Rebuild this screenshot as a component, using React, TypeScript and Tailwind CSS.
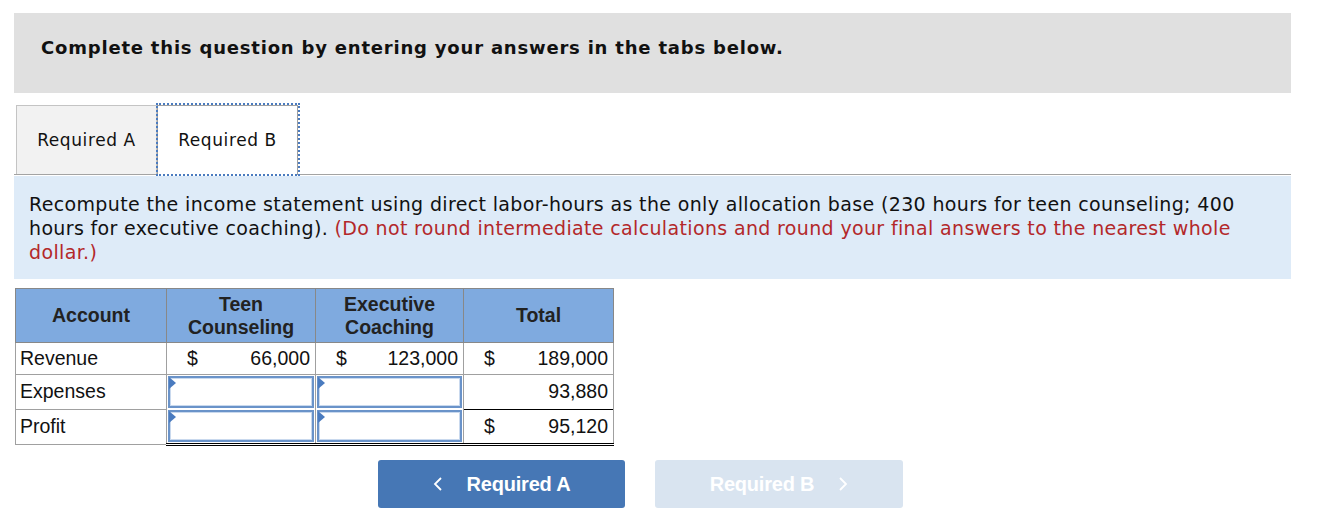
import React from "react";

const verdana = { fontFamily: '"DejaVu Sans", Verdana, sans-serif' };
const arial = { fontFamily: '"Liberation Sans", Arial, sans-serif' };

function Box() {
  return (
    <div className="relative h-[32px] m-[1px] border-2 border-[#6a93c9] bg-white shadow-[inset_0_0_0_1px_#c9d9ee]">
      <div className="absolute left-[-1px] top-[-1px] w-0 h-0 border-y-[6px] border-y-transparent border-l-[7px] border-l-[#4a7bbf]" />
    </div>
  );
}

export default function App() {
  return (
    <div className="bg-white w-[1336px] h-[514px] overflow-hidden">
      <div className="ml-[14px] w-[1277px] pt-[13px]">
        <div className="h-[80px] bg-[#e0e0e0] flex items-center pl-[27px] pb-[12px]" style={verdana}>
          <span className="text-[18px] font-bold text-[#111] tracking-[0.8px]">
            Complete this question by entering your answers in the tabs below.
          </span>
        </div>

        <div className="mt-[12px] flex items-end h-[70px] border-b border-[#a3a3a3] pl-[2px]" style={verdana}>
          <div className="h-[69px] w-[141px] bg-[#f2f2f2] border border-b-0 border-[#c4c4c4] flex items-center justify-center text-[17px] tracking-[0.6px] text-[#111] pt-[1px]">
            Required A
          </div>
          <div className="relative w-[141px] bg-white border border-b-0 border-[#a0a0a0] flex items-center justify-center text-[17px] tracking-[0.6px] text-[#111] -mb-[1px] h-[70px] pt-[1px]">
            <div className="absolute -left-[2px] -right-[3px] -top-[3px] -bottom-[1px] border-[2px] border-dotted border-[#4a7bbf]" />
            Required B
          </div>
        </div>

        <div className="mt-[1px] bg-[#deebf8] pl-[15px] pr-[40px] pt-[16px] pb-[15px] text-[19px] tracking-[0.35px] leading-[24px] text-[#111]" style={verdana}>
          Recompute the income statement using direct labor-hours as the only allocation base (230 hours for teen counseling; 400 hours for executive coaching).{" "}
          <span className="text-[#b3282a]">
            (Do not round intermediate calculations and round your final answers to the nearest whole dollar.)
          </span>
        </div>

        <table className="mt-[9px] ml-[1px] border-collapse text-[19.5px] text-[#111]" style={arial}>
          <colgroup>
            <col className="w-[151px]" />
            <col className="w-[149px]" />
            <col className="w-[148px]" />
            <col className="w-[150px]" />
          </colgroup>
          <thead>
            <tr className="h-[54px] bg-[#7faadf] font-bold text-[#222] leading-[23px]">
              <th className="border border-[#888] font-bold">Account</th>
              <th className="border border-[#888] font-bold">Teen<br />Counseling</th>
              <th className="border border-[#888] font-bold">Executive<br />Coaching</th>
              <th className="border border-[#888] font-bold">Total</th>
            </tr>
          </thead>
          <tbody>
            <tr className="h-[32px]">
              <td className="border border-[#a0a0a0] pl-[4px]">Revenue</td>
              <td className="border border-[#a0a0a0] px-[5px]">
                <div className="flex justify-between pl-[15px]"><span>$</span><span>66,000</span></div>
              </td>
              <td className="border border-[#a0a0a0] px-[5px]">
                <div className="flex justify-between pl-[15px]"><span>$</span><span>123,000</span></div>
              </td>
              <td className="border border-[#a0a0a0] px-[5px]">
                <div className="flex justify-between pl-[15px]"><span>$</span><span>189,000</span></div>
              </td>
            </tr>
            <tr className="h-[34px]">
              <td className="border border-[#a0a0a0] pl-[4px]">Expenses</td>
              <td className="p-0 border-x border-[#a0a0a0]"><Box /></td>
              <td className="p-0 border-x border-[#a0a0a0]"><Box /></td>
              <td className="border border-[#a0a0a0] border-b-black px-[5px] text-right">93,880</td>
            </tr>
            <tr className="h-[34px]">
              <td className="border border-[#a0a0a0] pl-[4px]">Profit</td>
              <td className="p-0 border-x border-[#a0a0a0] border-b-[3px] border-b-black border-double"><Box /></td>
              <td className="p-0 border-x border-[#a0a0a0] border-b-[3px] border-b-black border-double"><Box /></td>
              <td className="border-x border-[#a0a0a0] border-b-[3px] border-b-black border-double px-[5px]">
                <div className="flex justify-between pl-[15px]"><span>$</span><span>95,120</span></div>
              </td>
            </tr>
          </tbody>
        </table>

        <div className="mt-[14px] flex gap-[30px] pl-[364px]" style={arial}>
          <button className="w-[247px] h-[48px] rounded-[3px] bg-[#4677b5] text-white font-bold text-[20px] flex items-center justify-center gap-[24px] tracking-[-0.2px]">
            <svg width="10" height="16" viewBox="0 0 10 16" fill="none" stroke="white" strokeWidth="1.8"><path d="M8 2 L2 8 L8 14" /></svg>
            <span>Required A</span>
          </button>
          <button className="w-[248px] h-[48px] rounded-[3px] bg-[#d9e4f0] text-white font-bold text-[20px] flex items-center justify-center gap-[24px] tracking-[-0.2px]">
            <span>Required B</span>
            <svg width="10" height="16" viewBox="0 0 10 16" fill="none" stroke="white" strokeWidth="1.8"><path d="M2 2 L8 8 L2 14" /></svg>
          </button>
        </div>
      </div>
    </div>
  );
}
